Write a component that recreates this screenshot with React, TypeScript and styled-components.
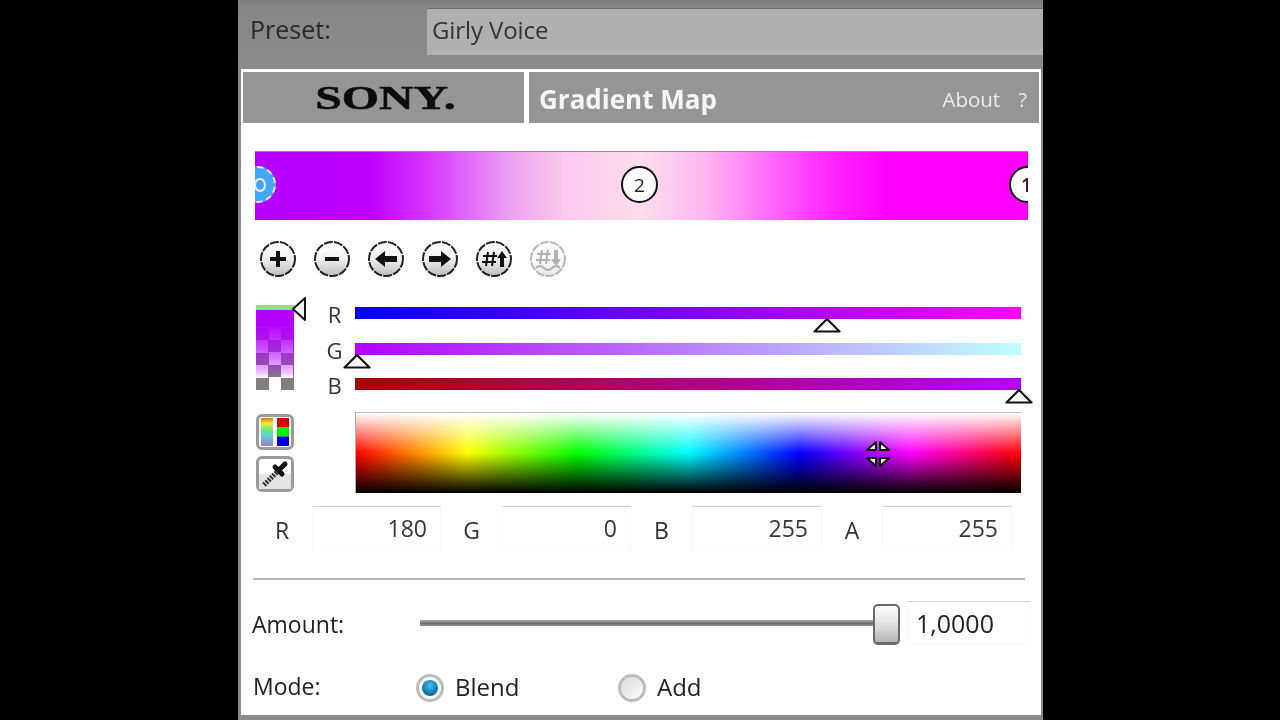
import React from 'react'
import styled, { createGlobalStyle } from 'styled-components'

const GlobalStyle = createGlobalStyle`
    html, body {
        margin: 0;
        height: 100%;
        background: #000;
        overflow: hidden;
    }
    body {
        font-family: "Open Sans", "DejaVu Sans", sans-serif;
    }
`

const Screen = styled.div`
    width: 1280px;
    height: 720px;
    background: #000;
    display: flex;
    justify-content: flex-start;
    padding-left: 238px;
    box-sizing: border-box;
`
const Win = styled.div`
    width: 805px;
    height: 720px;
    background: #8a8a8a;
    display: flex;
    flex-direction: column;
    filter: blur(0.55px);
`
const PresetBar = styled.div`
    height: 69px;
    flex: none;
    box-sizing: border-box;
    padding-top: 8px;
    display: flex;
    background: linear-gradient(#7e7e7e 0, #868686 8px, #8c8c8c 100%);
`
const PresetLabel = styled.div`
    width: 189px;
    box-sizing: border-box;
    padding: 3px 0 0 12px;
    font-size: 25px;
    line-height: 36px;
    color: #2a2a2a;
`
const PresetInput = styled.div`
    flex: 1;
    height: 47px;
    background: #b0b0b0;
    border-top: 1px solid #707070;
    box-sizing: border-box;
    padding: 3px 0 0 5px;
    font-size: 24px;
    line-height: 36px;
    letter-spacing: -0.1px;
    color: #30333a;
`
const Panel = styled.div`
    width: 800px;
    height: 646px;
    margin-left: 3px;
    flex: none;
    background: #fff;
    box-sizing: border-box;
    padding: 3px 2px 0;
    color: #222;
`
const Header = styled.div`
    display: grid;
    grid-template-columns: 281px 510px;
    gap: 5px;
    height: 51px;
`
const LogoBox = styled.div`
    background: #959595;
    display: flex;
    align-items: center;
    justify-content: center;
`
const Logo = styled.div`
    font-family: "Liberation Serif", serif;
    font-weight: 700;
    font-size: 33px;
    line-height: 32px;
    color: #0c0c0c;
    -webkit-text-stroke: 0.5px #0c0c0c;
    transform: scaleX(1.45);
    margin: 1px 0 0 3px;
`
const TitleBox = styled.div`
    background: #959595;
    display: flex;
    align-items: center;
    justify-content: space-between;
    padding: 0 12px 0 10px;
`
const Title = styled.div`
    font-weight: 700;
    font-size: 26px;
    color: #f6f6f6;
    margin-top: 3px;
`
const AboutLinks = styled.div`
    display: flex;
    gap: 18px;
    margin-top: 2px;
    font-size: 20.5px;
    color: #ececec;
`
const Body = styled.div`
    padding: 28px 0 0 12px;
`
const GradientBar = styled.div`
    position: relative;
    width: 773px;
    height: 69px;
    overflow: hidden;
    border-top: 1px solid #a080b0;
    box-sizing: border-box;
    background: linear-gradient(90deg, #b400ff 0, #c000ff 15%, #d93cff 23%, #ecA0f2 33%, #fcc8ec 40%, #ffdcee 50%, #ffb8f0 58%, #ff70f8 66%, #ff30ff 73%, #ff00ff 82%);
`
const Stop = styled.div<{ $at: number; $active?: boolean }>`
    position: absolute;
    top: 14px;
    left: ${p => p.$at}px;
    width: 37px;
    height: 37px;
    box-sizing: border-box;
    border-radius: 50%;
    border: 2px ${p => (p.$active ? 'dashed #e8f2ff' : 'solid #111')};
    background: ${p => (p.$active ? '#46a6ff' : '#fff')};
    display: flex;
    align-items: center;
    justify-content: center;
    font-size: 19px;
    color: #222;
`
const StopInnerArc = styled.span`
    width: 12px;
    height: 14px;
    margin-left: 4px;
    box-sizing: border-box;
    border: 2px solid #e8f2ff;
    border-radius: 50%;
`
const StopOne = styled.span`
    margin-left: -2px;
    font-weight: 600;
    color: #4a1010;
`
const Toolbar = styled.div`
    display: flex;
    gap: 18px;
    margin: 21px 0 0 5px;
    height: 36px;
`
const ColorSection = styled.div`
    display: flex;
    margin-top: 20px;
`
const LeftColumn = styled.div`
    position: relative;
    width: 68px;
    flex: none;
    padding: 8px 0 0 1px;
    box-sizing: border-box;
`
const Swatch = styled.div`
    width: 38px;
    height: 85px;
    box-sizing: border-box;
    border-top: 5px solid #93e07a;
    background:
        linear-gradient(#b400ff 0, #b400ff 18%, rgba(180, 0, 255, 0.7) 48%, rgba(180, 0, 255, 0.25) 78%, rgba(180, 0, 255, 0) 85%),
        repeating-conic-gradient(#808080 0 25%, #fff 0 50%) left bottom / 25px 25px;
`
const SwatchPointer = styled.svg`
    position: absolute;
    left: 37px;
    top: 0;
`
const ToolButtons = styled.div`
    display: flex;
    flex-direction: column;
    gap: 6px;
    margin-top: 24px;
`
const ToolButton = styled.div`
    width: 38px;
    height: 36px;
    box-sizing: border-box;
    border: 3px solid #9a9a9a;
    border-radius: 6px;
    background: #fff;
    display: flex;
    align-items: center;
    justify-content: center;
`
const RightColumn = styled.div`
    flex: 1;
    padding-top: 10px;
`
const Channels = styled.div`
    display: flex;
    flex-direction: column;
    gap: 23.5px;
`
const ChannelRow = styled.div`
    display: flex;
    height: 12px;
`
const ChannelLabel = styled.div`
    width: 32px;
    text-align: center;
    font-size: 22px;
    line-height: 15px;
    color: #333;
    padding-right: 9px;
    box-sizing: border-box;
`
const ChannelBar = styled.div<{ $from: string; $to: string }>`
    position: relative;
    width: 666px;
    height: 12px;
    background: linear-gradient(90deg, ${p => p.$from}, ${p => p.$to});
`
const ChannelThumb = styled.div<{ $at: number }>`
    position: absolute;
    top: 100%;
    left: ${p => p.$at}px;
    margin: -1px 0 0 -14px;
    line-height: 0;
`
const Picker = styled.div`
    position: relative;
    width: 666px;
    height: 81px;
    margin: 22px 0 0 32px;
    box-sizing: border-box;
    border-top: 1px solid #bdbdbd;
    border-left: 1px solid #b0b0b0;
    background:
        linear-gradient(#fff 0, rgba(255, 255, 255, 0) 50%, rgba(0, 0, 0, 0) 50%, #000 100%),
        linear-gradient(90deg, #f00, #ff0 16.7%, #0f0 33.3%, #0ff 50%, #00f 66.7%, #f0f 83.3%, #f00);
`
const Crosshair = styled.svg`
    position: absolute;
    left: 507px;
    top: 26px;
`
const ValuesRow = styled.div`
    display: flex;
    margin-top: 13px;
    height: 46px;
`
const ValueLabel = styled.div<{ $w: number; $nudge?: number }>`
    width: ${p => p.$w}px;
    flex: none;
    box-sizing: border-box;
    padding-right: ${p => p.$nudge ?? 0}px;
    text-align: center;
    font-size: 23px;
    line-height: 48px;
    color: #333;
`
const Field = styled.div<{ $w: number }>`
    width: ${p => p.$w}px;
    flex: none;
    box-sizing: border-box;
    border: 1px solid #f8f8f8;
    border-top-color: #cfcfcf;
    border-bottom-color: #fbfbfb;
    padding-right: 13px;
    text-align: right;
    font-size: 23px;
    line-height: 43px;
    color: #333640;
`
const Divider = styled.div`
    width: 772px;
    height: 2px;
    margin: 26px 0 0 -2px;
    background: #b8b8b8;
`
const AmountRow = styled.div`
    display: flex;
    align-items: center;
    height: 44px;
    margin: 21px 0 0 -3px;
`
const RowLabel = styled.div<{ $w: number; $dy?: number }>`
    width: ${p => p.$w}px;
    flex: none;
    margin-top: ${p => p.$dy ?? 0}px;
    font-size: 23px;
    color: #222;
`
const SliderWrap = styled.div`
    position: relative;
    width: 487px;
    flex: none;
    height: 44px;
    display: flex;
    align-items: center;
`
const Track = styled.div`
    width: 465px;
    height: 6px;
    background: linear-gradient(#b0b0b0, #6e6e6e 60%, #9a9a9a);
`
const Thumb = styled.div`
    position: absolute;
    right: 7px;
    top: 3px;
    width: 27px;
    height: 41px;
    box-sizing: border-box;
    border: 2px solid #6a6a6a;
    border-bottom-width: 3px;
    border-radius: 5px;
    background: linear-gradient(#fafafa, #e6e6e6 45%, #b4b4b4);
`
const AmountField = styled.div`
    width: 124px;
    height: 44px;
    flex: none;
    box-sizing: border-box;
    border: 1px solid #f8f8f8;
    border-top-color: #d4d4d4;
    padding-left: 8px;
    font-size: 25px;
    line-height: 42px;
    color: #222;
`
const ModeRow = styled.div`
    display: flex;
    align-items: center;
    height: 42px;
    margin: 20px 0 0 -2px;
`
const RadioOption = styled.div`
    width: 202px;
    flex: none;
    margin-top: 4px;
    display: flex;
    align-items: center;
    gap: 11px;
    font-size: 24px;
    line-height: 28px;
    color: #222;
`
const Radio = styled.div<{ $on?: boolean }>`
    width: 28px;
    height: 28px;
    flex: none;
    box-sizing: border-box;
    border-radius: 50%;
    border: 3px solid #bcbcbc;
    display: flex;
    align-items: center;
    justify-content: center;
    background: ${p => (p.$on ? '#fff' : 'linear-gradient(135deg, #d8d8d8, #fff)')};
    &::after {
        content: '';
        display: ${p => (p.$on ? 'block' : 'none')};
        width: 16px;
        height: 16px;
        border-radius: 50%;
        background: radial-gradient(circle at 50% 35%, #4fc0ea, #0b78ac 60%, #04506f);
    }
`
const RadioText = styled.span`
    margin-top: -2px;
`

function RoundIcon({ children, off }: { children: React.ReactNode; off?: boolean }) {
    return (
        <svg width="36" height="36" viewBox="0 0 36 36" opacity={off ? 0.32 : 1}>
            <defs>
                <linearGradient id="roundFill" x1="0" y1="0" x2="0" y2="1">
                    <stop offset="0" stopColor="#ffffff" />
                    <stop offset="0.5" stopColor="#f0f0f0" />
                    <stop offset="1" stopColor="#bcbcbc" />
                </linearGradient>
            </defs>
            <circle cx="18" cy="18" r="17" fill="url(#roundFill)" stroke="#222" strokeWidth="2" strokeDasharray="9 1.2" />
            {children}
        </svg>
    )
}

const glyph = { fill: 'none', stroke: '#111', strokeWidth: 3 }

function Triangle() {
    return (
        <svg width="28" height="15" viewBox="0 0 28 15">
            <path d="M14 1 L26.5 13.5 H1.5 Z" fill="#fff" stroke="#111" strokeWidth="2.2" strokeLinejoin="round" />
        </svg>
    )
}

export default function App() {
    return (
        <Screen>
            <GlobalStyle />
            <Win>
                <PresetBar>
                    <PresetLabel>Preset:</PresetLabel>
                    <PresetInput>Girly Voice</PresetInput>
                </PresetBar>
                <Panel>
                    <Header>
                        <LogoBox><Logo>SONY.</Logo></LogoBox>
                        <TitleBox>
                            <Title>Gradient Map</Title>
                            <AboutLinks><span>About</span><span>?</span></AboutLinks>
                        </TitleBox>
                    </Header>
                    <Body>
                        <GradientBar>
                            <Stop $at={-16} $active><StopInnerArc /></Stop>
                            <Stop $at={366}>2</Stop>
                            <Stop $at={754}><StopOne>1</StopOne></Stop>
                        </GradientBar>

                        <Toolbar>
                            <RoundIcon><path d="M18 10V26M10 18H26" {...glyph} strokeWidth={4} /></RoundIcon>
                            <RoundIcon><path d="M11 18H25" {...glyph} strokeWidth={4} /></RoundIcon>
                            <RoundIcon><path d="M7 18L17 10V15H29V21H17V26Z" fill="#111" /></RoundIcon>
                            <RoundIcon><path d="M29 18L19 10V15H7V21H19V26Z" fill="#111" /></RoundIcon>
                            <RoundIcon>
                                <path d="M12 11L10 25M18 11L16 25M7 15H21M6 21H20" {...glyph} strokeWidth={2} />
                                <path d="M26 10L31 17H28V26H24V17H21Z" fill="#111" />
                            </RoundIcon>
                            <RoundIcon off>
                                <path d="M12 9L10 23M18 9L16 23M7 13H21M6 19H20" {...glyph} strokeWidth={2} />
                                <path d="M26 25L31 18H28V9H24V18H21Z" fill="#111" />
                                <path d="M6 27Q10 23 14 27T22 27T30 27" {...glyph} strokeWidth={2} />
                            </RoundIcon>
                        </Toolbar>

                        <ColorSection>
                            <LeftColumn>
                                <Swatch />
                                <SwatchPointer width="16" height="26" viewBox="0 0 16 26">
                                    <path d="M13 1V23L1 12Z" fill="#fff" stroke="#111" strokeWidth="2" strokeLinejoin="round" />
                                </SwatchPointer>
                                <ToolButtons>
                                    <ToolButton>
                                        <svg width="30" height="28" viewBox="0 0 30 28">
                                            <defs>
                                                <linearGradient id="spectrum" x1="0" y1="0" x2="0" y2="1">
                                                    <stop offset="0" stopColor="#e8760a" />
                                                    <stop offset="0.2" stopColor="#ecec30" />
                                                    <stop offset="0.45" stopColor="#60ec80" />
                                                    <stop offset="0.65" stopColor="#60c8e0" />
                                                    <stop offset="1" stopColor="#9a80c0" />
                                                </linearGradient>
                                            </defs>
                                            <rect x="1" y="0" width="12" height="28" fill="url(#spectrum)" />
                                            <rect x="17" y="0" width="12" height="9.5" fill="#e00000" />
                                            <rect x="17" y="9.5" width="12" height="9" fill="#00f000" />
                                            <rect x="17" y="18.5" width="12" height="9.5" fill="#0000e0" />
                                        </svg>
                                    </ToolButton>
                                    <ToolButton>
                                        <svg width="32" height="30" viewBox="0 0 32 30">
                                            <rect x="0" y="15" width="32" height="15" fill="#e4e4e4" />
                                            <path d="M5 26L18 13" stroke="#333" strokeWidth="5" strokeDasharray="2 1.2" />
                                            <path d="M16 8L23 15M20 11L26 5" stroke="#111" strokeWidth="5" strokeLinecap="round" />
                                        </svg>
                                    </ToolButton>
                                </ToolButtons>
                            </LeftColumn>

                            <RightColumn>
                                <Channels>
                                    <ChannelRow>
                                        <ChannelLabel>R</ChannelLabel>
                                        <ChannelBar $from="#0000ff" $to="#ff00ff">
                                            <ChannelThumb $at={472}><Triangle /></ChannelThumb>
                                        </ChannelBar>
                                    </ChannelRow>
                                    <ChannelRow>
                                        <ChannelLabel>G</ChannelLabel>
                                        <ChannelBar $from="#b400ff" $to="#c0ffff">
                                            <ChannelThumb $at={2}><Triangle /></ChannelThumb>
                                        </ChannelBar>
                                    </ChannelRow>
                                    <ChannelRow>
                                        <ChannelLabel>B</ChannelLabel>
                                        <ChannelBar $from="#aa0000" $to="#b400ff">
                                            <ChannelThumb $at={664}><Triangle /></ChannelThumb>
                                        </ChannelBar>
                                    </ChannelRow>
                                </Channels>
                                <Picker>
                                    <Crosshair width="30" height="30" viewBox="0 0 30 30">
                                        <g fill="#fff" stroke="#111" strokeWidth="2" strokeLinejoin="round">
                                            <path d="M13 3V11H4Z" />
                                            <path d="M17 3V11H26Z" />
                                            <path d="M13 27V19H4Z" />
                                            <path d="M17 27V19H26Z" />
                                        </g>
                                    </Crosshair>
                                </Picker>
                            </RightColumn>
                        </ColorSection>

                        <ValuesRow>
                            <ValueLabel $w={57} $nudge={3}>R</ValueLabel>
                            <Field $w={129}>180</Field>
                            <ValueLabel $w={61}>G</ValueLabel>
                            <Field $w={129}>0</Field>
                            <ValueLabel $w={61}>B</ValueLabel>
                            <Field $w={130}>255</Field>
                            <ValueLabel $w={60}>A</ValueLabel>
                            <Field $w={130}>255</Field>
                        </ValuesRow>

                        <Divider />

                        <AmountRow>
                            <RowLabel $w={168} $dy={2}>Amount:</RowLabel>
                            <SliderWrap>
                                <Track />
                                <Thumb />
                            </SliderWrap>
                            <AmountField>1,0000</AmountField>
                        </AmountRow>

                        <ModeRow>
                            <RowLabel $w={163}>Mode:</RowLabel>
                            <RadioOption><Radio $on /><RadioText>Blend</RadioText></RadioOption>
                            <RadioOption><Radio /><RadioText>Add</RadioText></RadioOption>
                        </ModeRow>
                    </Body>
                </Panel>
            </Win>
        </Screen>
    )
}
